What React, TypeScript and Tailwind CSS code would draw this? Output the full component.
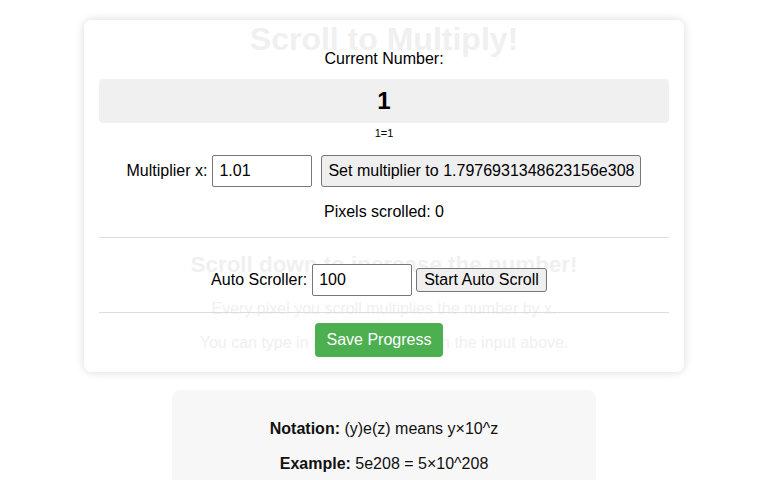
import React, { useState } from 'react';

const App: React.FC = () => {
    const [multiplier, setMultiplier] = useState('1.01');
    const [autoSpeed, setAutoSpeed] = useState('100');

    return (
        <div className="min-h-screen bg-white text-black font-['Liberation_Sans',Arial,sans-serif] pt-[20px]">
            {/* Main card */}
            <div className="relative mx-auto w-[600px] bg-white rounded-lg shadow-[0_0_10px_rgba(0,0,0,0.15)] px-[15px] pt-[30px] pb-[15px]">
                {/* Faded text behind the controls */}
                <div className="absolute inset-x-0 top-0 text-center text-[#f0f0f0] pointer-events-none select-none">
                    <h1 className="text-[32px] font-bold leading-[37px] mt-[1px]">Scroll to Multiply!</h1>
                    <h2 className="text-[22.4px] font-bold leading-[28px] mt-[193px]">Scroll down to increase the number!</h2>
                    <p className="text-[16px] leading-[18px] mt-[21px]">Every pixel you scroll multiplies the number by x.</p>
                    <p className="text-[16px] leading-[18px] mt-[16px]">You can type in a multiplier value in the input above.</p>
                </div>

                {/* Controls */}
                <div className="relative text-center">
                    <div className="text-[16px] leading-[18px]">Current Number:</div>
                    <div className="mt-[11px] h-[44px] bg-[#f0f0f0] rounded flex items-center justify-center text-[24px] font-bold">
                        1
                    </div>
                    <div className="mt-[4px] text-[11px] leading-[13px]">1=1</div>

                    <div className="mt-[15px] flex items-center justify-center h-[32px]">
                        <span className="text-[16px] mr-[5px]">Multiplier x:</span>
                        <input
                            value={multiplier}
                            onChange={e => setMultiplier(e.target.value)}
                            className="w-[100px] h-[32px] border border-[#767676] rounded-[2px] px-[6px] text-[16px] bg-white outline-none"
                        />
                        <button className="ml-[9px] h-[32px] px-[6px] bg-[#efefef] border border-[#767676] rounded-[3px] text-[16px]">
                            Set multiplier to 1.7976931348623156e308
                        </button>
                    </div>

                    <div className="mt-[16px] text-[16px] leading-[18px]">Pixels scrolled: 0</div>

                    <hr className="mt-[16px] border-0 border-t border-[#dddddd]" />

                    <div className="mt-[26px] mr-[10px] flex items-center justify-center h-[32px]">
                        <span className="text-[16px] mr-[5px]">Auto Scroller:</span>
                        <input
                            value={autoSpeed}
                            onChange={e => setAutoSpeed(e.target.value)}
                            className="w-[100px] h-[32px] border border-[#767676] rounded-[2px] px-[6px] text-[16px] bg-white outline-none"
                        />
                        <button className="ml-[4px] h-[24px] px-[7px] bg-[#efefef] border border-[#767676] rounded-[3px] text-[16px] leading-[18px]">
                            Start Auto Scroll
                        </button>
                    </div>

                    <hr className="mt-[16px] border-0 border-t border-[#dddddd]" />

                    <div className="mr-[10px]">
                        <button className="mt-[10px] h-[34px] px-[12px] bg-[#4caf50] text-white text-[16px] rounded">
                            Save Progress
                        </button>
                    </div>
                </div>
            </div>

            {/* Notation box */}
            <div className="mx-auto mt-[18px] w-[424px] bg-[#f7f7f7] rounded-lg pt-[30px] pb-[20px] text-center text-[16px] text-[#111]">
                <p className="leading-[18px]"><b>Notation:</b> (y)e(z) means y×10^z</p>
                <p className="leading-[18px] mt-[17px]"><b>Example:</b> 5e208 = 5×10^208</p>
            </div>
        </div>
    );
};

export default App;
